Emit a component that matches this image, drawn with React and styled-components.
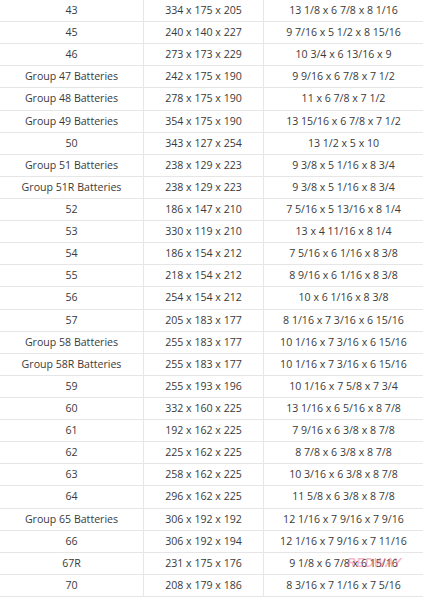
import React from "react";
import styled, { createGlobalStyle } from "styled-components";

const Global = createGlobalStyle`
  html, body { margin: 0; padding: 0; background: #ffffff; }
  body { font-family: "Open Sans", "Noto Sans", "Liberation Sans", sans-serif; }
`;

const rows = [
  ["43", "334 x 175 x 205", "13 1/8 x 6 7/8 x 8 1/16"],
  ["45", "240 x 140 x 227", "9 7/16 x 5 1/2 x 8 15/16"],
  ["46", "273 x 173 x 229", "10 3/4 x 6 13/16 x 9"],
  ["Group 47 Batteries", "242 x 175 x 190", "9 9/16 x 6 7/8 x 7 1/2"],
  ["Group 48 Batteries", "278 x 175 x 190", "11 x 6 7/8 x 7 1/2"],
  ["Group 49 Batteries", "354 x 175 x 190", "13 15/16 x 6 7/8 x 7 1/2"],
  ["50", "343 x 127 x 254", "13 1/2 x 5 x 10"],
  ["Group 51 Batteries", "238 x 129 x 223", "9 3/8 x 5 1/16 x 8 3/4"],
  ["Group 51R Batteries", "238 x 129 x 223", "9 3/8 x 5 1/16 x 8 3/4"],
  ["52", "186 x 147 x 210", "7 5/16 x 5 13/16 x 8 1/4"],
  ["53", "330 x 119 x 210", "13 x 4 11/16 x 8 1/4"],
  ["54", "186 x 154 x 212", "7 5/16 x 6 1/16 x 8 3/8"],
  ["55", "218 x 154 x 212", "8 9/16 x 6 1/16 x 8 3/8"],
  ["56", "254 x 154 x 212", "10 x 6 1/16 x 8 3/8"],
  ["57", "205 x 183 x 177", "8 1/16 x 7 3/16 x 6 15/16"],
  ["Group 58 Batteries", "255 x 183 x 177", "10 1/16 x 7 3/16 x 6 15/16"],
  ["Group 58R Batteries", "255 x 183 x 177", "10 1/16 x 7 3/16 x 6 15/16"],
  ["59", "255 x 193 x 196", "10 1/16 x 7 5/8 x 7 3/4"],
  ["60", "332 x 160 x 225", "13 1/16 x 6 5/16 x 8 7/8"],
  ["61", "192 x 162 x 225", "7 9/16 x 6 3/8 x 8 7/8"],
  ["62", "225 x 162 x 225", "8 7/8 x 6 3/8 x 8 7/8"],
  ["63", "258 x 162 x 225", "10 3/16 x 6 3/8 x 8 7/8"],
  ["64", "296 x 162 x 225", "11 5/8 x 6 3/8 x 8 7/8"],
  ["Group 65 Batteries", "306 x 192 x 192", "12 1/16 x 7 9/16 x 7 9/16"],
  ["66", "306 x 192 x 194", "12 1/16 x 7 9/16 x 7 11/16"],
  ["67R", "231 x 175 x 176", "9 1/8 x 6 7/8 x 6 15/16"],
  ["70", "208 x 179 x 186", "8 3/16 x 7 1/16 x 7 5/16"],
];

const Page = styled.div`
  position: relative;
  width: 423px;
  height: 600px;
  overflow: hidden;
  background: #fff;
`;

const Table = styled.div`
  display: grid;
  grid-template-columns: 143px 120px 160px;
  grid-auto-rows: 22.12px;
`;

const Cell = styled.div`
  box-sizing: border-box;
  display: flex;
  align-items: center;
  justify-content: center;
  border-bottom: 1px solid #e6e6e6;
  border-left: ${(p) => (p.$first ? "none" : "1px solid #e6e6e6")};
  font-size: 10.6px;
  color: #3a3a3a;
  white-space: nowrap;
  padding-bottom: 1px;
`;

const Watermark = styled.div`
  position: absolute;
  left: 347px;
  top: 556px;
  font-family: "Liberation Sans", sans-serif;
  font-weight: 700;
  font-style: italic;
  font-size: 12px;
  letter-spacing: 0.5px;
  color: rgba(230, 90, 130, 0.45);
  pointer-events: none;
`;

export default function App() {
  return (
    <Page>
      <Global />
      <Table>
        {rows.map((r, i) => (
          <React.Fragment key={i}>
            <Cell $first>{r[0]}</Cell>
            <Cell>{r[1]}</Cell>
            <Cell>{r[2]}</Cell>
          </React.Fragment>
        ))}
      </Table>
      <Watermark>REDWAY</Watermark>
    </Page>
  );
}
